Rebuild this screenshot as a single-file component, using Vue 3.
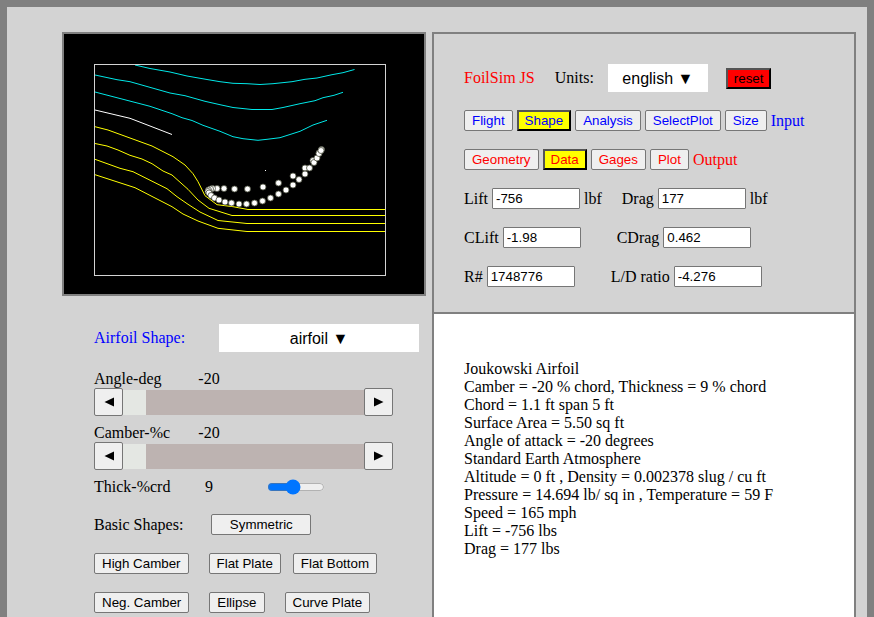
<script setup>
import { ref } from 'vue'

const units = ref('english')
const shape = ref('airfoil')
const angle = ref(-20)
const camber = ref(-20)
const thickness = ref(9)

const inputTabs = ['Flight', 'Shape', 'Analysis', 'SelectPlot', 'Size']
const outputTabs = ['Geometry', 'Data', 'Gages', 'Plot']
const activeInput = ref('Shape')
const activeOutput = ref('Data')

const report = [
  'Joukowski Airfoil',
  'Camber = -20 % chord, Thickness = 9 % chord',
  'Chord = 1.1 ft span 5 ft',
  'Surface Area = 5.50 sq ft',
  'Angle of attack = -20 degrees',
  'Standard Earth Atmosphere',
  'Altitude = 0 ft , Density = 0.002378 slug / cu ft',
  'Pressure = 14.694 lb/ sq in , Temperature = 59 F',
  'Speed = 165 mph',
  'Lift = -756 lbs',
  'Drag = 177 lbs',
]

const streamlines = [
  { color: '#00e8e8', points: '135,65 150,68.5 170,72 187,76 207,79.5 220,81.7 233,83.3 247,83.7 260,84.5 273,83.7 292,81.7 305,79.3 317,78 332,74.7 343,72.7 354.5,69.5' },
  { color: '#00e8e8', points: '95,75 117,79.7 130,81.7 170,93 185,95.7 205,101.3 220,104.7 233,107.5 252,109.5 272,109.5 283,107.5 300,103.7 315,100.7 323,97.7 334,95.3 343,92.3' },
  { color: '#00e8e8', points: '95,92 150,106.3 172,113.7 182,117.7 192,120.5 203,125.3 220,131.3 233,136.7 243,138.7 258,140.3 267,139.3 280,137.7 300,131.3 313,125 327,120.3' },
  { color: '#ffffff', points: '95,110 130,118.3 143,123.3 172,134.5' },
  { color: '#ffff00', points: '95,126.7 108,130 152,146 173,156.7 185,165 193,173.7 198,181.7 205,195.7 217,204.7 233,206.7 248,209.5 386,209.5' },
  { color: '#ffff00', points: '95,143.5 107,146 118,150 130,155.3 142,159 152,163.7 163,171 172,175 188,189.3 198,200 209,208.3 232,215.5 386,215.5' },
  { color: '#ffff00', points: '95,159.3 120,168.3 133,171.7 167,188.7 177,196.7 188,204.3 200,212 218,220.5 247,223.5 386,223.5' },
  { color: '#ffff00', points: '95,174.7 135,187.7 172,206.7 183,214 198,221 218,228.3 247,231.5 386,231.5' },
]

const foil = [
  [321.5, 149.5], [319, 153], [313, 160.5], [305, 168], [293, 176], [278.5, 183],
  [263, 187], [247.5, 189], [234.5, 189], [224, 188.5], [217, 188.5], [212.5, 188.5],
  [210.5, 189], [208.5, 190], [208, 191.5], [209, 193], [211, 195.5], [214.5, 198],
  [219, 200], [225, 202], [231.5, 203], [239, 204], [246.5, 204], [254.5, 203],
  [262.5, 201], [270.5, 198], [278.5, 194], [286, 190], [293, 185], [299, 179.5],
  [305, 174], [309.5, 168], [314, 162.5], [317, 158], [319, 153.5], [321, 150.5],
]
</script>

<template>
  <main class="page">
    <section class="left">
      <svg class="tunnel" viewBox="64 34 360 260" role="img" aria-label="Flow around airfoil">
        <polyline
          v-for="(line, i) in streamlines"
          :key="i"
          :points="line.points"
          :stroke="line.color"
          fill="none"
        />
        <circle
          v-for="([x, y], i) in foil"
          :key="'p' + i"
          :cx="x"
          :cy="y"
          r="3"
          fill="#fff"
          stroke="#4c5040"
          stroke-width="0.8"
        />
        <rect x="265" y="170" width="1" height="1" fill="#fff" />
        <rect x="94.5" y="64.5" width="291" height="211" fill="none" stroke="#d3d3d3" />
      </svg>

      <div class="controls">
        <div class="shape-row">
          <label class="blue" for="shape">Airfoil Shape:</label>
          <select id="shape" v-model="shape" class="menu wide">
            <option value="airfoil">airfoil ▼</option>
          </select>
        </div>

        <div class="slider">
          <div class="caption">
            <label class="name" for="angle">Angle-deg</label>
            <output class="value">{{ angle }}</output>
          </div>
          <div class="scroller">
            <button class="btn arrow" aria-label="Decrease angle" @click="angle = Math.max(-20, angle - 1)">
              <svg width="10" height="10" viewBox="0 0 10 10"><path d="M10 0.5V9.5L0.5 5Z" /></svg>
            </button>
            <input id="angle" v-model.number="angle" class="bar" type="range" min="-20" max="20" />
            <button class="btn arrow" aria-label="Increase angle" @click="angle = Math.min(20, angle + 1)">
              <svg width="10" height="10" viewBox="0 0 10 10"><path d="M0 0.5V9.5L9.5 5Z" /></svg>
            </button>
          </div>
        </div>

        <div class="slider">
          <div class="caption">
            <label class="name" for="camber">Camber-%c</label>
            <output class="value">{{ camber }}</output>
          </div>
          <div class="scroller">
            <button class="btn arrow" aria-label="Decrease camber" @click="camber = Math.max(-20, camber - 1)">
              <svg width="10" height="10" viewBox="0 0 10 10"><path d="M10 0.5V9.5L0.5 5Z" /></svg>
            </button>
            <input id="camber" v-model.number="camber" class="bar" type="range" min="-20" max="20" />
            <button class="btn arrow" aria-label="Increase camber" @click="camber = Math.min(20, camber + 1)">
              <svg width="10" height="10" viewBox="0 0 10 10"><path d="M0 0.5V9.5L9.5 5Z" /></svg>
            </button>
          </div>
        </div>

        <div class="caption">
          <label class="name" for="thick">Thick-%crd</label>
          <output class="value">{{ thickness }}</output>
          <input id="thick" v-model.number="thickness" class="thick" type="range" min="1" max="20" />
        </div>

        <div class="presets">
          <div class="preset-row basic">
            <span>Basic Shapes:</span>
            <button class="btn symmetric">Symmetric</button>
          </div>
          <div class="preset-row">
            <button class="btn">High Camber</button>
            <div class="pair">
              <button class="btn">Flat Plate</button>
              <button class="btn">Flat Bottom</button>
            </div>
          </div>
          <div class="preset-row">
            <button class="btn">Neg. Camber</button>
            <button class="btn">Ellipse</button>
            <button class="btn">Curve Plate</button>
          </div>
        </div>
      </div>
    </section>

    <section class="right">
      <div class="panel">
        <div class="title-row">
          <span class="red">FoilSim JS</span>
          <label class="units" for="units">Units:</label>
          <select id="units" v-model="units" class="menu">
            <option value="english">english ▼</option>
          </select>
          <button class="btn reset">reset</button>
        </div>
        <div class="row blue">
          <button
            v-for="tab in inputTabs"
            :key="tab"
            class="btn blue"
            :class="{ active: tab === activeInput }"
            @click="activeInput = tab"
          >{{ tab }}</button>
          <span>Input</span>
        </div>
        <div class="row red">
          <button
            v-for="tab in outputTabs"
            :key="tab"
            class="btn red"
            :class="{ active: tab === activeOutput }"
            @click="activeOutput = tab"
          >{{ tab }}</button>
          <span>Output</span>
        </div>
        <div class="readings near">
          <div class="row">
            <label for="lift">Lift</label><input id="lift" class="field" value="-756" /><span>lbf</span>
          </div>
          <div class="row">
            <label for="drag">Drag</label><input id="drag" class="field" value="177" /><span>lbf</span>
          </div>
        </div>
        <div class="readings">
          <div class="row">
            <label for="clift">CLift</label><input id="clift" class="field short" value="-1.98" />
          </div>
          <div class="row">
            <label for="cdrag">CDrag</label><input id="cdrag" class="field" value="0.462" />
          </div>
        </div>
        <div class="readings">
          <div class="row">
            <label for="reynolds">R#</label><input id="reynolds" class="field" value="1748776" />
          </div>
          <div class="row">
            <label for="ratio">L/D ratio</label><input id="ratio" class="field" value="-4.276" />
          </div>
        </div>
      </div>
      <div class="report">
        <div v-for="line in report" :key="line">{{ line }}</div>
      </div>
    </section>
  </main>
</template>

<style>
body {
  margin: 0;
  background: #d3d3d3;
}
</style>

<style scoped>
.page {
  box-sizing: border-box;
  display: grid;
  grid-template-columns: 364px minmax(0, 1fr);
  column-gap: 6px;
  min-height: 100vh;
  padding: 25px 11px 0 55px;
  border: 7px solid #808080;
  border-bottom: 0;
  background: #d3d3d3;
  color: #000;
  font: 16px/18px "Liberation Serif", "Times New Roman", serif;
}

.tunnel {
  display: block;
  box-sizing: border-box;
  width: 100%;
  border: 2px solid #808080;
  background: #000;
}

.controls {
  display: flex;
  flex-direction: column;
  padding: 28px 0 4px 32px;
}

.shape-row {
  display: flex;
  align-items: center;
  justify-content: space-between;
  padding-right: 7px;
  margin-bottom: 18px;
}

.menu {
  appearance: none;
  width: 100px;
  height: 28px;
  padding: 0;
  border: 0;
  border-radius: 0;
  background: #fff;
  color: #000;
  font: 16px "Liberation Sans", Arial, sans-serif;
  text-align: center;
  text-align-last: center;
}

.menu.wide {
  width: 200px;
}

.slider {
  margin-bottom: 8px;
}

.caption {
  display: flex;
  align-items: center;
  height: 18px;
}

.name {
  width: 102px;
}

.value {
  width: 26px;
  text-align: center;
}

.thick {
  width: 58px;
  height: 16px;
  margin: 0 0 0 45px;
}

.scroller {
  display: flex;
  align-items: center;
}

.bar {
  appearance: none;
  width: 241px;
  height: 25px;
  margin: 0;
  background: #bdb3b1;
}

.bar::-webkit-slider-thumb {
  appearance: none;
  width: 23px;
  height: 25px;
  background: #e4e7e3;
}

.btn {
  box-sizing: border-box;
  height: 21px;
  margin: 0;
  padding: 0 7px;
  border: 1px solid #767676;
  border-radius: 2px;
  background: #efefef;
  color: #000;
  font-family: "Liberation Sans", Arial, sans-serif;
  white-space: nowrap;
}

.btn.arrow {
  display: flex;
  align-items: center;
  justify-content: center;
  width: 29px;
  height: 28px;
  padding: 0;
}

.presets {
  display: flex;
  flex-direction: column;
  gap: 18px;
  margin-top: 18px;
}

.preset-row {
  display: flex;
  align-items: center;
  gap: 20px;
}

.preset-row.basic {
  gap: 28px;
}

.pair {
  display: flex;
  gap: 12px;
}

.symmetric {
  width: 100px;
}

.right {
  display: flex;
  flex-direction: column;
  border: 2px solid #808080;
  border-bottom: 0;
}

.panel {
  display: flex;
  flex-direction: column;
  gap: 18px;
  padding: 30px 30px 25px;
  border-bottom: 2px solid #808080;
}

.title-row,
.row,
.readings {
  display: flex;
  align-items: center;
}

.row {
  gap: 4px;
}

.readings {
  gap: 36px;
}

.readings.near {
  gap: 20px;
}

.units {
  margin: 0 14px 0 20px;
}

.blue {
  color: #00f;
}

.red {
  color: #f00;
}

.btn.active,
.btn.reset {
  padding: 0 6px;
  border: 2px outset #000;
  border-radius: 0;
}

.btn.active {
  background: #ff0;
}

.btn.reset {
  margin-left: 18px;
  background: #f00;
}

.field {
  box-sizing: border-box;
  width: 88px;
  height: 21px;
  margin: 0;
  padding: 0 3px;
  border: 1px solid #767676;
  border-radius: 1px;
  background: #fff;
  color: #000;
  font-family: "Liberation Sans", Arial, sans-serif;
}

.field.short {
  width: 78px;
}

.report {
  flex: 1;
  padding: 46px 30px 30px;
  background: #fff;
}
</style>
